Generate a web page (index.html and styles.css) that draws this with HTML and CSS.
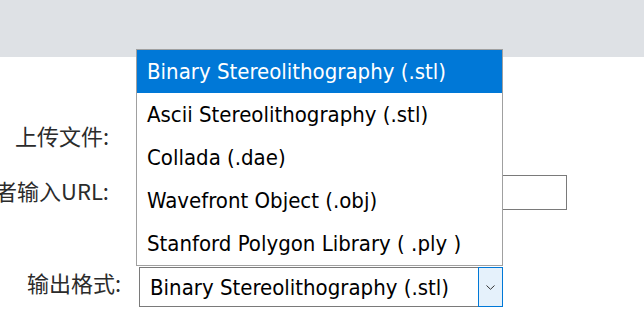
FILE: index.html
```html
<!DOCTYPE html>
<html lang="zh">
<head>
<meta charset="utf-8">
<title>格式转换</title>
<link rel="stylesheet" href="styles.css">
</head>
<body>
<div class="topbar"></div>
<form class="form">
  <div class="row row-file">
    <div class="label">上传文件:</div>
    <div class="file-field"></div>
  </div>
  <div class="row row-url">
    <div class="label">或者输入URL:</div>
    <div class="text-input"></div>
  </div>
  <div class="row row-format">
    <div class="label label-wide">输出格式:</div>
    <div class="select-wrap">
      <div class="select">
        <span class="select-value">Binary Stereolithography (.stl)</span>
        <span class="select-btn">
          <svg width="9" height="5" viewBox="0 0 9 5"><path d="M0.5 0.5 L4.5 4.3 L8.5 0.5" fill="none" stroke="#333" stroke-width="1"/></svg>
        </span>
      </div>
      <ul class="options">
        <li class="option selected">Binary Stereolithography (.stl)</li>
        <li class="option">Ascii Stereolithography (.stl)</li>
        <li class="option">Collada (.dae)</li>
        <li class="option">Wavefront Object (.obj)</li>
        <li class="option">Stanford Polygon Library ( .ply )</li>
      </ul>
    </div>
  </div>
</form>
</body>
</html>
```

FILE: styles.css
```css
html, body {
  margin: 0;
  padding: 0;
  background: #ffffff;
  overflow: hidden;
}
body {
  width: 644px;
  height: 331px;
  font-family: "DejaVu Sans", "Noto Sans CJK SC", sans-serif;
  font-stretch: condensed;
}
.topbar {
  height: 57px;
  background: #dee1e5;
}
.form {
  margin: 0;
  padding-top: 63px;
}
.row {
  display: flex;
  align-items: center;
}
.label {
  width: 109px;
  flex: none;
  display: flex;
  justify-content: flex-end;
  white-space: nowrap;
  font-family: "Noto Sans CJK SC", sans-serif;
  font-stretch: normal;
  font-size: 22px;
  line-height: 1;
  padding-bottom: 6px;
  color: #2b2b2b;
}
.label-wide {
  width: 121px;
  padding-bottom: 10px;
}
.row-file {
  height: 36px;
}
.file-field {
  margin-left: 30px;
  height: 36px;
}
.row-url {
  margin-top: 19px;
  height: 35px;
}
.text-input {
  margin-left: 30px;
  width: 426px;
  height: 33px;
  border: 1px solid #7a7a7a;
}
.row-format {
  margin-top: 57px;
  height: 40px;
}
.select-wrap {
  position: relative;
  margin-left: 18px;
}
.select {
  box-sizing: border-box;
  width: 364px;
  height: 40px;
  border: 1px solid #7a7a7a;
  display: flex;
  align-items: center;
  font-size: 22px;
  color: #000;
}
.select-value {
  flex: 1;
  min-width: 0;
  overflow: hidden;
  padding-left: 10px;
  white-space: nowrap;
}
.select-btn {
  flex: none;
  box-sizing: border-box;
  width: 25px;
  height: 40px;
  margin: -1px -1px -1px 0;
  background: #e5f1fb;
  border: 1px solid #0078d7;
  display: flex;
  align-items: center;
  justify-content: center;
}
.options {
  position: absolute;
  left: -3px;
  bottom: calc(100% + 1px);
  width: 367px;
  box-sizing: border-box;
  margin: 0;
  padding: 0;
  list-style: none;
  background: #fff;
  border: 1px solid #a0a0a0;
}
.option {
  height: 43px;
  line-height: 43px;
  padding-left: 10px;
  font-size: 22px;
  color: #000;
  white-space: nowrap;
}
.option.selected {
  background: #0078d7;
  color: #fff;
}
```
